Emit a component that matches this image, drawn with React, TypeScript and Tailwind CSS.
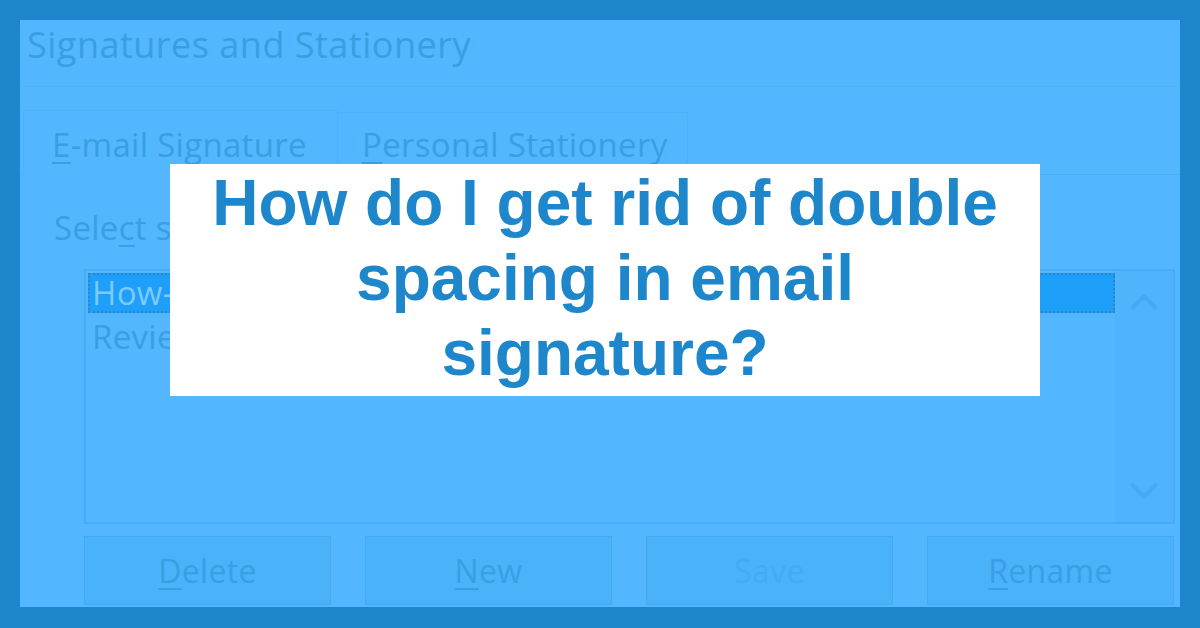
import { ChevronUp, ChevronDown } from 'lucide-react';

const uiFont = { fontFamily: '"Open Sans", "Noto Sans", sans-serif' };

function Key({ children }: { children: string }) {
  return <span className="underline decoration-[2px] underline-offset-[5px]">{children}</span>;
}

function DialogButton({ label, hotkey, rest, disabled }: { label?: string; hotkey?: string; rest?: string; disabled?: boolean }) {
  return (
    <button
      className={`w-[247px] h-[69px] border border-[#45abf1] bg-[#4ab2f9] text-[32px] tracking-[0.3px] flex items-center justify-center ${
        disabled ? 'text-[#46aaf0]' : 'text-[#3a9ee2]'
      }`}
    >
      {hotkey && <Key>{hotkey}</Key>}
      {rest}
      {label}
    </button>
  );
}

export default function App() {
  return (
    <div className="w-[1200px] h-[628px] bg-[#1e87cc] pt-[20px] px-[20px] pb-[21px]">
      <div className="relative h-full bg-[#52b7fe] flex flex-col text-[#3a9ee2]" style={uiFont}>
        {/* Title bar */}
        <div className="h-[67px] border-b border-[#4db3fa] pl-[7px] pt-[3px] text-[36px] leading-[44px] tracking-[0.5px]">
          Signatures and Stationery
        </div>

        {/* Tabs */}
        <div className="flex items-end h-[88px] pl-[3px] pr-[5px] border-b border-[#4aaff5]">
          <div className="w-[315px] h-[65px] -mb-px border border-b-0 border-[#4db2f8] bg-[#52b7fe] pl-[28px] pt-[14px] text-[33px] leading-[40px] tracking-[0.3px]">
            <Key>E</Key>-mail Signature
          </div>
          <div className="w-[350px] h-[62px] border border-b-0 border-l-0 border-[#4db2f8] pl-[24px] pt-[12px] text-[33px] leading-[40px] tracking-[0.3px]">
            <Key>P</Key>ersonal Stationery
          </div>
        </div>

        {/* Tab content */}
        <div className="pl-[34px] mt-[33px] text-[33px] leading-[40px] tracking-[0.3px]">
          Sele<Key>c</Key>t signature to edit
        </div>

        <div className="ml-[64px] mr-[5px] mt-[21px] h-[255px] border-2 border-[#47acf2] flex">
          <div className="flex-1 pt-[2px] pl-[2px] text-[33px] tracking-[0.3px]">
            <div className="h-[40px] bg-[#1e9ff9] border-2 border-dotted border-[#2e86c4] text-[#7dcafd] pl-[2px] flex items-center">
              How-To Outlook
            </div>
            <div className="h-[40px] mt-[4px] pl-[4px] flex items-center">Reviews</div>
          </div>
          <div className="w-[58px] bg-[#50b4fc] flex flex-col items-center justify-between py-[8px]">
            <ChevronUp size={46} strokeWidth={2.2} className="text-[#46aaf0]" />
            <ChevronDown size={46} strokeWidth={2.2} className="text-[#46aaf0]" />
          </div>
        </div>

        <div className="ml-[64px] mt-[12px] flex gap-[34px]">
          <DialogButton hotkey="D" rest="elete" />
          <DialogButton hotkey="N" rest="ew" />
          <DialogButton label="Save" disabled />
          <DialogButton hotkey="R" rest="ename" />
        </div>

        {/* Question overlay */}
        <div className="absolute left-[150px] top-[144px] w-[870px] h-[232px] bg-white flex items-center justify-center">
          <p
            className="text-center text-[64px] leading-[75px] font-bold text-[#1e87cc] -mt-[4px]"
            style={{ fontFamily: '"Liberation Sans", Arial, sans-serif' }}
          >
            How do I get rid of double
            <br />
            spacing in email
            <br />
            signature?
          </p>
        </div>
      </div>
    </div>
  );
}
